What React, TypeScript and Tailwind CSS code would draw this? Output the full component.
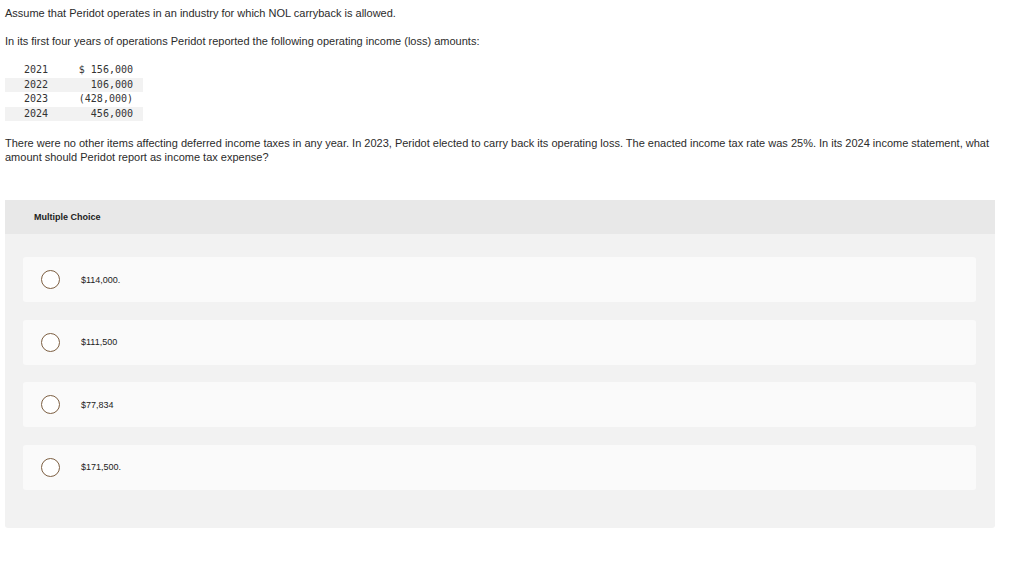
const rows = [
  { year: "2021", amount: "$ 156,000", shaded: false },
  { year: "2022", amount: "106,000", shaded: true },
  { year: "2023", amount: "(428,000)", shaded: false },
  { year: "2024", amount: "456,000", shaded: true },
];

const choices = ["$114,000.", "$111,500", "$77,834", "$171,500."];

const Choice: React.FC<{ label: string }> = ({ label }) => (
  <div className="flex items-center h-[45px] pl-[18px] bg-[#fafafa] rounded-[3px]">
    <span className="w-[19px] h-[19px] rounded-full border border-[#7d5f42] bg-white shrink-0" />
    <span className="ml-[21px] text-[9px] text-[#222]">{label}</span>
  </div>
);

export default function App() {
  return (
    <div className="w-[1024px] h-[568px] bg-white px-[5px] pt-[6px] text-[#2b2b2b] font-['Liberation_Sans',Arial,sans-serif] text-[11px] leading-[14px]">
      <p>Assume that Peridot operates in an industry for which NOL carryback is allowed.</p>
      <p className="mt-[14px]">
        In its first four years of operations Peridot reported the following operating income (loss) amounts:
      </p>
      <table className="mt-[15px] w-[138px] border-collapse font-['DejaVu_Sans_Mono',monospace] text-[10px] text-[#333]">
        <tbody>
          {rows.map((r) => (
            <tr key={r.year} className={r.shaded ? "bg-[#f2f2f2]" : ""}>
              <td className="h-[14.5px] w-[57px] pl-[19px] p-0 leading-[14.5px]">{r.year}</td>
              <td className="h-[14.5px] pr-[10px] text-right leading-[14.5px]">{r.amount}</td>
            </tr>
          ))}
        </tbody>
      </table>
      <p className="mt-[15px] pr-[25px]">
        There were no other items affecting deferred income taxes in any year. In 2023, Peridot elected to carry back
        its operating loss. The enacted income tax rate was 25%. In its 2024 income statement, what amount should
        Peridot report as income tax expense?
      </p>
      <section className="mt-[36px] w-[990px] bg-[#f2f2f2] rounded-b-[3px]">
        <div className="h-[34px] flex items-center pl-[29px] bg-[#e8e8e8] text-[9px] font-semibold text-[#222]">
          Multiple Choice
        </div>
        <div className="flex flex-col gap-[17.5px] pl-[18px] pr-[19px] pt-[23px] pb-[38px]">
          {choices.map((c) => (
            <Choice key={c} label={c} />
          ))}
        </div>
      </section>
    </div>
  );
}
